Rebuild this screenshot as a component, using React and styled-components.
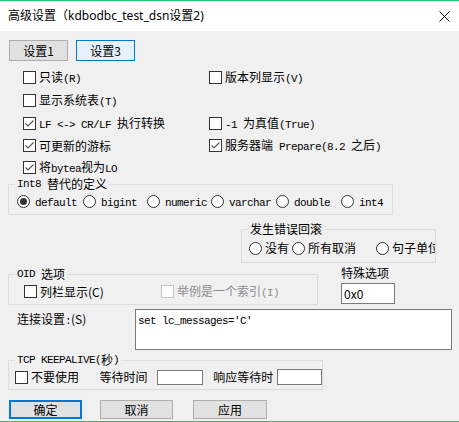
import React from "react";
import styled, { createGlobalStyle } from "styled-components";

const GlobalStyle = createGlobalStyle`
  html, body {
    margin: 0;
    padding: 0;
    background: #f0f0f0;
  }

  body {
    font-family: "Noto Sans CJK SC", "Noto Sans", sans-serif;
    font-size: 12px;
    color: #000;
  }
`;

const Window = styled.div`
  width: 459px;
  height: 422px;
  box-sizing: border-box;
  border-top: 1px solid #1fc66b;
  border-bottom: 1px solid #1fc66b;
  background: #f0f0f0;

  display: flex;
  flex-direction: column;
  overflow: hidden;
`;

const TitleBar = styled.div`
  height: 30px;
  flex-shrink: 0;
  padding: 0 9px 0 8px;

  display: flex;
  justify-content: space-between;
  align-items: center;

  background: #fff;
`;

const Title = styled.span`
  font-family: "Noto Sans", "Noto Sans CJK SC", sans-serif;
  font-size: 12px;
  line-height: 16px;
`;

const M = styled.span`
  font-family: "Liberation Mono", monospace;
  font-size: 11px;
  line-height: 14px;
  letter-spacing: -0.6px;
  white-space: pre;
`;

const TabRow = styled.div`
  margin-top: 9px;
  padding-left: 9px;
  flex-shrink: 0;

  display: flex;
  gap: 8px;
`;

const Tab = styled.div`
  width: 59px;
  height: 21px;
  box-sizing: border-box;

  display: flex;
  justify-content: center;
  align-items: center;

  border: 1px solid ${({ active }) => (active ? "#0078d7" : "#adadad")};
  background: ${({ active }) => (active ? "#e5f1fb" : "#e1e1e1")};
  line-height: 16px;
`;

const CheckGrid = styled.div`
  margin-top: 5px;
  padding-left: 23px;
  flex-shrink: 0;

  display: grid;
  grid-template-columns: 186px auto;
  grid-template-rows: 22px 24px 22px 23px 20px;
  align-items: center;
`;

const Item = styled.label`
  display: flex;
  align-items: center;
  gap: ${({ gap }) => gap ?? 3}px;

  line-height: 16px;
  white-space: nowrap;
  color: ${({ disabled }) => (disabled ? "#8d8d8d" : "#000")};
`;

const Box = styled.span`
  width: 13px;
  height: 13px;
  box-sizing: border-box;
  flex-shrink: 0;

  display: flex;
  justify-content: center;
  align-items: center;

  border: 1px solid ${({ disabled }) => (disabled ? "#c4c4c4" : "#333")};
  background: #fff;
`;

const Circle = styled.span`
  width: 13px;
  height: 13px;
  box-sizing: border-box;
  flex-shrink: 0;
  border-radius: 50%;

  display: flex;
  justify-content: center;
  align-items: center;

  border: 1px solid #333;
  background: #fff;
`;

const Dot = styled.span`
  width: 7px;
  height: 7px;
  border-radius: 50%;
  background: #333;
`;

const Group = styled.fieldset`
  width: ${({ w }) => w}px;
  height: ${({ h }) => h}px;
  box-sizing: border-box;
  margin: ${({ top }) => top ?? 0}px 0 0 ${({ left }) => left ?? 8}px;
  padding: 0;
  min-width: 0;
  flex-shrink: 0;

  border: 1px solid #dcdcdc;
  align-self: flex-start;
`;

const Legend = styled.legend`
  height: 14px;
  margin-left: 6px;
  padding: 0 2px;

  display: flex;
  align-items: center;

  line-height: 14px;
  font-size: 12px;
  white-space: nowrap;
`;

const OptionRow = styled.div`
  height: ${({ h }) => h}px;
  padding-left: ${({ pad }) => pad}px;

  display: grid;
  grid-template-columns: ${({ cols }) => cols};
  align-items: center;
  overflow: hidden;
`;

const MidRow = styled.div`
  margin-top: 2px;
  padding-left: 8px;
  flex-shrink: 0;

  display: flex;
  align-items: flex-start;
  gap: 23px;
`;

const SpecialCol = styled.div`
  display: flex;
  flex-direction: column;
  gap: 2px;
`;

const FieldLabel = styled.span`
  height: 16px;
  line-height: 16px;
  white-space: nowrap;
`;

const TextBox = styled.div`
  width: ${({ w }) => w}px;
  height: ${({ h }) => h}px;
  box-sizing: border-box;
  padding: 0 2px;
  flex-shrink: 0;

  display: flex;
  align-items: center;

  border: 1px solid #7a7a7a;
  background: #fff;
  line-height: 16px;
`;

const ConnectRow = styled.div`
  height: 41px;
  margin-top: 4px;
  padding-left: 17px;
  flex-shrink: 0;

  display: flex;
  align-items: flex-start;
`;

const ConnectLabel = styled.span`
  width: 118px;
  margin-top: 2px;
  line-height: 16px;
`;

const Area = styled.div`
  width: 317px;
  height: 41px;
  box-sizing: border-box;
  padding: 2px 2px;

  border: 1px solid #7a7a7a;
  background: #fff;
  line-height: 14px;
`;

const TcpRow = styled.div`
  height: 20px;
  padding-left: 6px;

  display: flex;
  align-items: center;
`;

const TcpCheck = styled(Item)`
  width: 85px;
`;

const TcpLabel = styled.span`
  width: ${({ w }) => w}px;
  margin-left: ${({ ml }) => ml ?? 0}px;
  line-height: 16px;
  white-space: nowrap;
`;

const ButtonRow = styled.div`
  margin-top: 10px;
  padding-left: 9px;
  flex-shrink: 0;

  display: flex;
`;

const Button = styled.div`
  width: ${({ w }) => w}px;
  height: 19px;
  box-sizing: border-box;
  margin-left: ${({ ml }) => ml ?? 0}px;

  display: flex;
  justify-content: center;
  align-items: center;

  border: ${({ primary }) => (primary ? "2px solid #0078d7" : "1px solid #adadad")};
  background: #e1e1e1;
  line-height: 16px;
`;

const CheckMark = () => (
  <svg width="11" height="11" viewBox="0 0 11 11">
    <path d="M1.5 5.5 L4 8 L9.5 2.5" fill="none" stroke="#555" strokeWidth="1.1" />
  </svg>
);

const Check = ({ checked, disabled, children }) => (
  <Item disabled={disabled}>
    <Box disabled={disabled}>{checked && <CheckMark />}</Box>
    <span>{children}</span>
  </Item>
);

const Radio = ({ checked, gap, children }) => (
  <Item gap={gap}>
    <Circle>{checked && <Dot />}</Circle>
    <span>{children}</span>
  </Item>
);

const App = () => {
  return (
    <Window>
      <GlobalStyle />
      <TitleBar>
        <Title>
          高级设置（kdbodbc_test_dsn设置2)
        </Title>
        <svg width="11" height="11" viewBox="0 0 11 11">
          <path d="M0.5 0.5 L10.5 10.5 M10.5 0.5 L0.5 10.5" stroke="#000" strokeWidth="1" />
        </svg>
      </TitleBar>

      <TabRow>
        <Tab>设置1</Tab>
        <Tab active>设置3</Tab>
      </TabRow>

      <CheckGrid>
        <Check>只读<M>(R)</M></Check>
        <Check>版本列显示<M>(V)</M></Check>
        <Check>显示系统表<M>(T)</M></Check>
        <span />
        <Check checked><M>LF &lt;-&gt; CR/LF </M>执行转换</Check>
        <Check><M>-1 </M>为真值<M>(True)</M></Check>
        <Check checked>可更新的游标</Check>
        <Check checked>服务器端<M> Prepare(8.2 </M>之后<M>)</M></Check>
        <Check checked>将<M>bytea</M>视为<M>LO</M></Check>
        <span />
      </CheckGrid>

      <Group w={385} h={38}>
        <Legend><M>Int8 </M>替代的定义</Legend>
        <OptionRow h={20} pad={8} cols="66px 64px 64px 65px 65px auto">
          <Radio checked gap={5}><M>default</M></Radio>
          <Radio gap={5}><M>bigint</M></Radio>
          <Radio gap={5}><M>numeric</M></Radio>
          <Radio gap={5}><M>varchar</M></Radio>
          <Radio gap={5}><M>double</M></Radio>
          <Radio gap={5}><M>int4</M></Radio>
        </OptionRow>
      </Group>

      <Group w={195} h={41} left={241} top={7}>
        <Legend>发生错误回滚</Legend>
        <OptionRow h={24} pad={7} cols="43px 84px 54px">
          <Radio>没有</Radio>
          <Radio>所有取消</Radio>
          <Radio>句子单位</Radio>
        </OptionRow>
      </Group>

      <MidRow>
        <Group w={310} h={38} left={0} top={2}>
          <Legend><M>OID </M>选项</Legend>
          <OptionRow h={21} pad={15} cols="137px auto">
            <Check>列栏显示(C)</Check>
            <Check disabled>举例是一个索引<M>(I)</M></Check>
          </OptionRow>
        </Group>
        <SpecialCol>
          <FieldLabel>特殊选项</FieldLabel>
          <TextBox w={54} h={21}>0x0</TextBox>
        </SpecialCol>
      </MidRow>

      <ConnectRow>
        <ConnectLabel>连接设置<M>:</M>(S)</ConnectLabel>
        <Area><M>set lc_messages='C'</M></Area>
      </ConnectRow>

      <Group w={315} h={37} top={3}>
        <Legend><M>TCP KEEPALIVE(</M>秒<M>)</M></Legend>
        <TcpRow>
          <TcpCheck>
            <Box />
            <span>不要使用</span>
          </TcpCheck>
          <TcpLabel w={58}>等待时间</TcpLabel>
          <TextBox w={46} h={15} />
          <TcpLabel w={64} ml={10}>响应等待时</TcpLabel>
          <TextBox w={45} h={16} />
        </TcpRow>
      </Group>

      <ButtonRow>
        <Button w={73} primary>确定</Button>
        <Button w={73} ml={18}>取消</Button>
        <Button w={74} ml={20}>应用</Button>
      </ButtonRow>
    </Window>
  );
};

export default App;
